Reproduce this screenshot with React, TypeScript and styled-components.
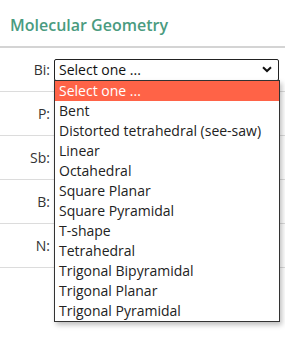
import React from "react";
import styled, { createGlobalStyle } from "styled-components";

const Global = createGlobalStyle`
  html, body {
    margin: 0;
    background: #fff;
    font-family: "Open Sans", "Liberation Sans", sans-serif;
    color: #222;
  }
`;

const options = [
  "Select one ...",
  "Bent",
  "Distorted tetrahedral (see-saw)",
  "Linear",
  "Octahedral",
  "Square Planar",
  "Square Pyramidal",
  "T-shape",
  "Tetrahedral",
  "Trigonal Bipyramidal",
  "Trigonal Planar",
  "Trigonal Pyramidal",
];

const atoms = ["Bi", "P", "Sb", "B", "N"];

function App() {
  return (
    <Page>
      <Global />
      <Header>Molecular Geometry</Header>
      <Rows>
        {atoms.map((a, i) => (
          <Row key={a}>
            <Label>{a}:</Label>
            {i === 0 && (
              <SelectBox>
                <span>Select one ...</span>
                <svg width="10" height="7" viewBox="0 0 10 7">
                  <path d="M1 1.2 L5 5 L9 1.2" fill="none" stroke="#111" strokeWidth="2" />
                </svg>
              </SelectBox>
            )}
          </Row>
        ))}
        <Menu>
          {options.map((o, i) => (
            <Option key={o} $active={i === 0}>
              {o}
            </Option>
          ))}
        </Menu>
      </Rows>
    </Page>
  );
}

const Page = styled.div`
  width: 285px;
  min-height: 346px;
`;

const Header = styled.div`
  height: 48px;
  box-sizing: border-box;
  padding: 14px 0 0 10px;
  font-size: 16px;
  font-weight: 600;
  color: #4a9b7f;
  border-bottom: 2px solid #d4d4d4;
`;

const Rows = styled.div`
  position: relative;
`;

const Row = styled.div`
  display: flex;
  align-items: center;
  gap: 4px;
  height: 44px;
  box-sizing: border-box;
  border-bottom: 1px solid #dcdcdc;
`;

const Label = styled.div`
  width: 50px;
  text-align: right;
  font-size: 14px;
  color: #333;
`;

const SelectBox = styled.div`
  width: 225px;
  height: 22px;
  box-sizing: border-box;
  border: 1px solid #222;
  border-radius: 2px;
  display: flex;
  align-items: center;
  justify-content: space-between;
  padding: 0 6px 0 4px;
  font-size: 14px;
  color: #111;
`;

const Menu = styled.div`
  position: absolute;
  left: 54px;
  top: 32px;
  width: 226px;
  box-sizing: border-box;
  border: 1px solid #333;
  background: #fff;
  box-shadow: 2px 3px 5px rgba(0, 0, 0, 0.25);
`;

const Option = styled.div<{ $active?: boolean }>`
  height: 20px;
  line-height: 20px;
  padding-left: 4px;
  font-size: 14px;
  white-space: nowrap;
  background: ${(p) => (p.$active ? "#ff6347" : "transparent")};
  color: ${(p) => (p.$active ? "#fff" : "#222")};
`;

export default App;
